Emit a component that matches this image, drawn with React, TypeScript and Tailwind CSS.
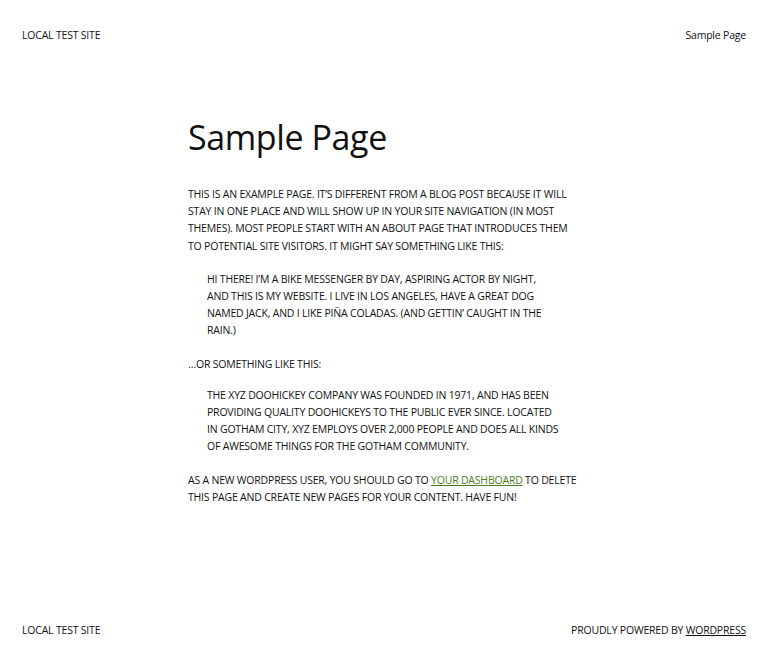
export default function App() {
  const font = { fontFamily: '"Open Sans", "Noto Sans", sans-serif' };
  return (
    <div className="flex min-h-[667px] flex-col bg-white text-[#111]" style={font}>
      <header className="flex items-center justify-between px-[22px] pt-[28px] text-[10.5px] leading-[14px] tracking-[-0.2px]">
        <a className="uppercase">Local Test Site</a>
        <a>Sample Page</a>
      </header>

      <main className="mx-auto w-[392px] flex-1 pt-[73px]">
        <h1 className="text-[34px] leading-[44px] tracking-[-0.4px]">Sample Page</h1>
        <div className="mt-[27px] text-[10.5px] uppercase leading-[17.2px] tracking-[-0.2px]">
          <p>
            This is an example page. It’s different from a blog post because it will stay in one place and will
            show up in your site navigation (in most themes). Most people start with an About page that introduces
            them to potential site visitors. It might say something like this:
          </p>
          <blockquote className="mt-[16px] pl-[19px] pr-[18px]">
            <p>
              Hi there! I’m a bike messenger by day, aspiring actor by night,
              <br />
              and this is my website. I live in Los Angeles, have a great dog named Jack, and I like piña coladas.
              (And gettin’ caught in the rain.)
            </p>
          </blockquote>
          <p className="mt-[16px]">…or something like this:</p>
          <blockquote className="mt-[14px] pl-[19px] pr-[18px]">
            <p>
              The XYZ Doohickey Company was founded in 1971, and has been providing quality doohickeys to the public
              ever since. Located in Gotham City, XYZ employs over 2,000 people and does all kinds of awesome things
              for the Gotham community.
            </p>
          </blockquote>
          <p className="mt-[16px]">
            As a new WordPress user, you should go to{" "}
            <a className="text-[#4c7d1c] underline">your dashboard</a> to delete this page and create new pages for
            your content. Have fun!
          </p>
        </div>
      </main>

      <footer className="flex items-center justify-between px-[22px] pb-[30px] text-[10.5px] uppercase leading-[14px] tracking-[-0.2px]">
        <span>Local Test Site</span>
        <span>
          Proudly powered by <a className="underline">WordPress</a>
        </span>
      </footer>
    </div>
  );
}
